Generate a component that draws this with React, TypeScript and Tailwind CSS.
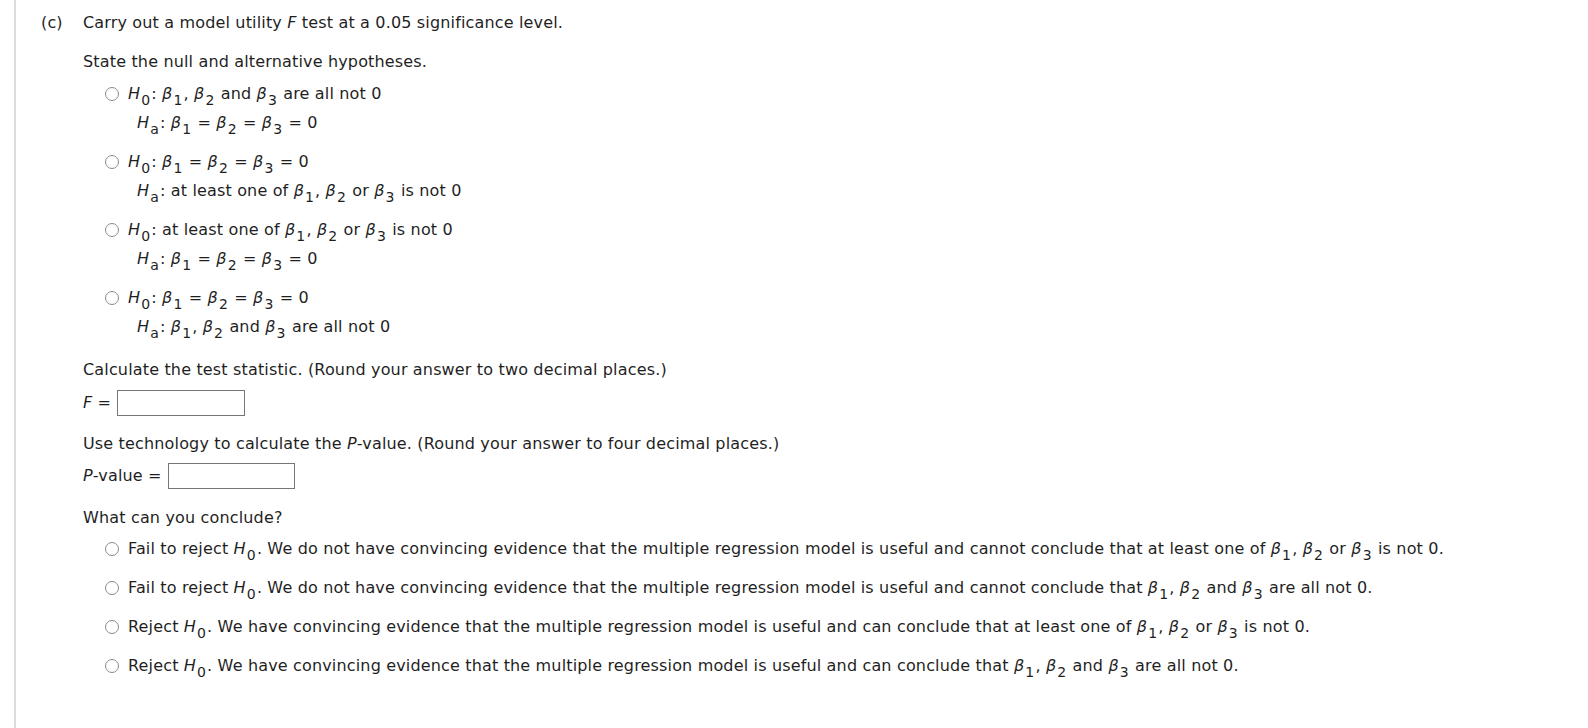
import type { ReactNode } from "react";

function Sub({ children }: { children: ReactNode }) {
  return <span className="relative top-[6px] px-[1px] text-[14px] leading-none not-italic">{children}</span>;
}

function B({ n }: { n: string }) {
  return (
    <>
      <i>β</i>
      <Sub>{n}</Sub>
    </>
  );
}

function H({ s }: { s: string }) {
  return (
    <>
      <i>H</i>
      <Sub>{s}</Sub>
    </>
  );
}

function Radio() {
  return <span className="inline-block h-[14px] w-[14px] shrink-0 rounded-full border border-[#8a8a8a] bg-white" />;
}

const AllEqual = () => (
  <>
    <B n="1" /> = <B n="2" /> = <B n="3" /> = 0
  </>
);
const AtLeastOne = () => (
  <>
    at least one of <B n="1" />, <B n="2" /> or <B n="3" /> is not 0
  </>
);
const AllNot = () => (
  <>
    <B n="1" />, <B n="2" /> and <B n="3" /> are all not 0
  </>
);

function Hyp({ h0, ha, first }: { h0: ReactNode; ha: ReactNode; first?: boolean }) {
  return (
    <div className={first ? "mt-[12px]" : "mt-[19px]"}>
      <div className="flex h-[20px] items-center gap-[9px] pl-[22px]">
        <Radio />
        <span className="whitespace-nowrap">
          <H s="0" />: {h0}
        </span>
      </div>
      <div className="mt-[9px] h-[20px] whitespace-nowrap pl-[54px] leading-[20px]">
        <H s="a" />: {ha}
      </div>
    </div>
  );
}

function Conclusion({ children }: { children: ReactNode }) {
  return (
    <div className="mt-[19px] flex h-[20px] items-center gap-[9px] pl-[22px] first:mt-[11px]">
      <Radio />
      <span className="whitespace-nowrap">{children}</span>
    </div>
  );
}

export default function App() {
  return (
    <div
      className="min-h-[728px] bg-white text-[16px] leading-[20px] tracking-[0.16px] text-[#1f1f1f]"
      style={{ fontFamily: '"DejaVu Sans", Verdana, sans-serif' }}
    >
      <div className="ml-[14px] min-h-[728px] border-l-2 border-[#dcdcdc] pl-[25px] pt-[13px]">
        <div className="flex">
          <span className="w-[42px]">(c)</span>
          <div className="flex-1">
            <div className="h-[20px]">
              Carry out a model utility <i>F</i> test at a 0.05 significance level.
            </div>
            <div className="mt-[19px] h-[20px]">State the null and alternative hypotheses.</div>

            <Hyp first h0={<AllNot />} ha={<AllEqual />} />
            <Hyp h0={<AllEqual />} ha={<AtLeastOne />} />
            <Hyp h0={<AtLeastOne />} ha={<AllEqual />} />
            <Hyp h0={<AllEqual />} ha={<AllNot />} />

            <div className="mt-[23px] h-[20px]">
              Calculate the test statistic. (Round your answer to two decimal places.)
            </div>
            <div className="mt-[10px] flex h-[26px] items-center gap-[6px]">
              <span>
                <i>F</i> =
              </span>
              <input className="h-[26px] w-[128px] border border-[#767676] bg-white" />
            </div>

            <div className="mt-[18px] h-[20px]">
              Use technology to calculate the <i>P</i>-value. (Round your answer to four decimal places.)
            </div>
            <div className="mt-[9px] flex h-[26px] items-center gap-[6px]">
              <span>
                <i>P</i>-value =
              </span>
              <input className="h-[26px] w-[127px] border border-[#767676] bg-white" />
            </div>

            <div className="mt-[19px] h-[20px]">What can you conclude?</div>

            <div>
              <Conclusion>
                Fail to reject <H s="0" />. We do not have convincing evidence that the multiple regression model is
                useful and cannot conclude that at least one of <B n="1" />, <B n="2" /> or <B n="3" /> is not 0.
              </Conclusion>
              <Conclusion>
                Fail to reject <H s="0" />. We do not have convincing evidence that the multiple regression model is
                useful and cannot conclude that <B n="1" />, <B n="2" /> and <B n="3" /> are all not 0.
              </Conclusion>
              <Conclusion>
                Reject <H s="0" />. We have convincing evidence that the multiple regression model is useful and can
                conclude that at least one of <B n="1" />, <B n="2" /> or <B n="3" /> is not 0.
              </Conclusion>
              <Conclusion>
                Reject <H s="0" />. We have convincing evidence that the multiple regression model is useful and can
                conclude that <B n="1" />, <B n="2" /> and <B n="3" /> are all not 0.
              </Conclusion>
            </div>
          </div>
        </div>
      </div>
    </div>
  );
}
